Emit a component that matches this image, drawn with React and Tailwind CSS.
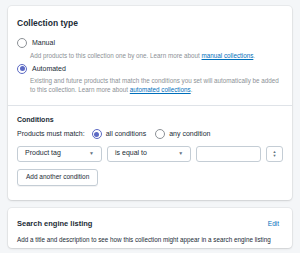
export default function App() {
  return (
    <div
      className="w-[300px] h-[253px] bg-[#f4f6f8] overflow-hidden pt-[6px] pl-[8px]"
      style={{ fontFamily: '"Liberation Sans", Arial, sans-serif' }}
    >
      <div className="w-[284px] flex flex-col gap-[8px]">
        {/* Collection type */}
        <div className="bg-white rounded-[4px] shadow-[0_0_0_1px_rgba(63,63,68,0.06),0_1px_2px_rgba(63,63,68,0.15)]">
          <div className="pl-[9px] pr-[4px] pt-[12px] pb-[11px]">
            <div className="text-[8.5px] font-bold text-[#212b36] leading-[10px]">Collection type</div>
            <div className="mt-[10px] flex items-center gap-[5px]">
              <span className="w-[10px] h-[10px] rounded-full border border-[#8c9196] bg-white" />
              <span className="text-[7px] text-[#212b36]">Manual</span>
            </div>
            <div className="pl-[13px] mt-[2px] text-[6.3px] leading-[9px] text-[#8c9196] whitespace-nowrap">
              Add products to this collection one by one. Learn more about{" "}
              <span className="text-[#006fbb] underline">manual collections</span>.
            </div>
            <div className="mt-[4px] flex items-center gap-[5px]">
              <span className="w-[10px] h-[10px] rounded-full border border-[#5c6ac4] bg-white flex items-center justify-center">
                <span className="w-[5px] h-[5px] rounded-full bg-[#5c6ac4]" />
              </span>
              <span className="text-[7px] text-[#212b36]">Automated</span>
            </div>
            <div className="pl-[13px] mt-[2px] text-[6.3px] leading-[9px] text-[#8c9196] whitespace-nowrap">
              Existing and future products that match the conditions you set will automatically be added
              <br />
              to this collection. Learn more about{" "}
              <span className="text-[#006fbb] underline">automated collections</span>.
            </div>
          </div>
          <div className="border-t border-[#dfe3e8] px-[9px] pt-[9px] pb-[9px]">
            <div className="text-[7px] font-bold text-[#212b36] leading-[9px]">Conditions</div>
            <div className="mt-[5px] flex items-center text-[7px] text-[#212b36]">
              <span>Products must match:</span>
              <span className="ml-[7px] w-[10px] h-[10px] rounded-full border border-[#5c6ac4] flex items-center justify-center">
                <span className="w-[5px] h-[5px] rounded-full bg-[#5c6ac4]" />
              </span>
              <span className="ml-[4px]">all conditions</span>
              <span className="ml-[9px] w-[10px] h-[10px] rounded-full border border-[#8c9196]" />
              <span className="ml-[4px]">any condition</span>
            </div>
            <div className="mt-[6px] flex gap-[5px] h-[16px]">
              <div className="w-[86px] border border-[#c4cdd5] rounded-[3px] flex items-center justify-between px-[7px] text-[7px] text-[#212b36]">
                <span>Product tag</span>
                <span className="text-[5px] text-[#637381]">▼</span>
              </div>
              <div className="w-[85px] border border-[#c4cdd5] rounded-[3px] flex items-center justify-between px-[7px] text-[7px] text-[#212b36]">
                <span>is equal to</span>
                <span className="text-[5px] text-[#637381]">▼</span>
              </div>
              <div className="w-[66px] border border-[#c4cdd5] rounded-[3px]" />
              <div className="w-[17px] border border-[#c4cdd5] rounded-[3px] flex flex-col items-center justify-center text-[4px] leading-[4px] text-[#637381]">
                <span>▲</span>
                <span>▼</span>
              </div>
            </div>
            <div className="mt-[7px] mb-[5px] inline-flex h-[17px] px-[8px] items-center border border-[#c4cdd5] rounded-[3px] text-[6.5px] text-[#212b36] shadow-[0_1px_0_rgba(22,29,37,0.05)]">
              Add another condition
            </div>
          </div>
        </div>

        {/* Search engine listing */}
        <div className="bg-white rounded-[4px] shadow-[0_0_0_1px_rgba(63,63,68,0.06),0_1px_2px_rgba(63,63,68,0.15)] pl-[9px] pr-[13px] pt-[11px] pb-[4px]">
          <div className="flex items-center justify-between">
            <span className="text-[7.5px] font-bold text-[#212b36] leading-[10px]">Search engine listing</span>
            <span className="text-[6.5px] text-[#006fbb]">Edit</span>
          </div>
          <div className="mt-[6px] text-[6.3px] leading-[9px] text-[#212b36] whitespace-nowrap">
            Add a title and description to see how this collection might appear in a search engine listing
          </div>
        </div>
      </div>
    </div>
  );
}
